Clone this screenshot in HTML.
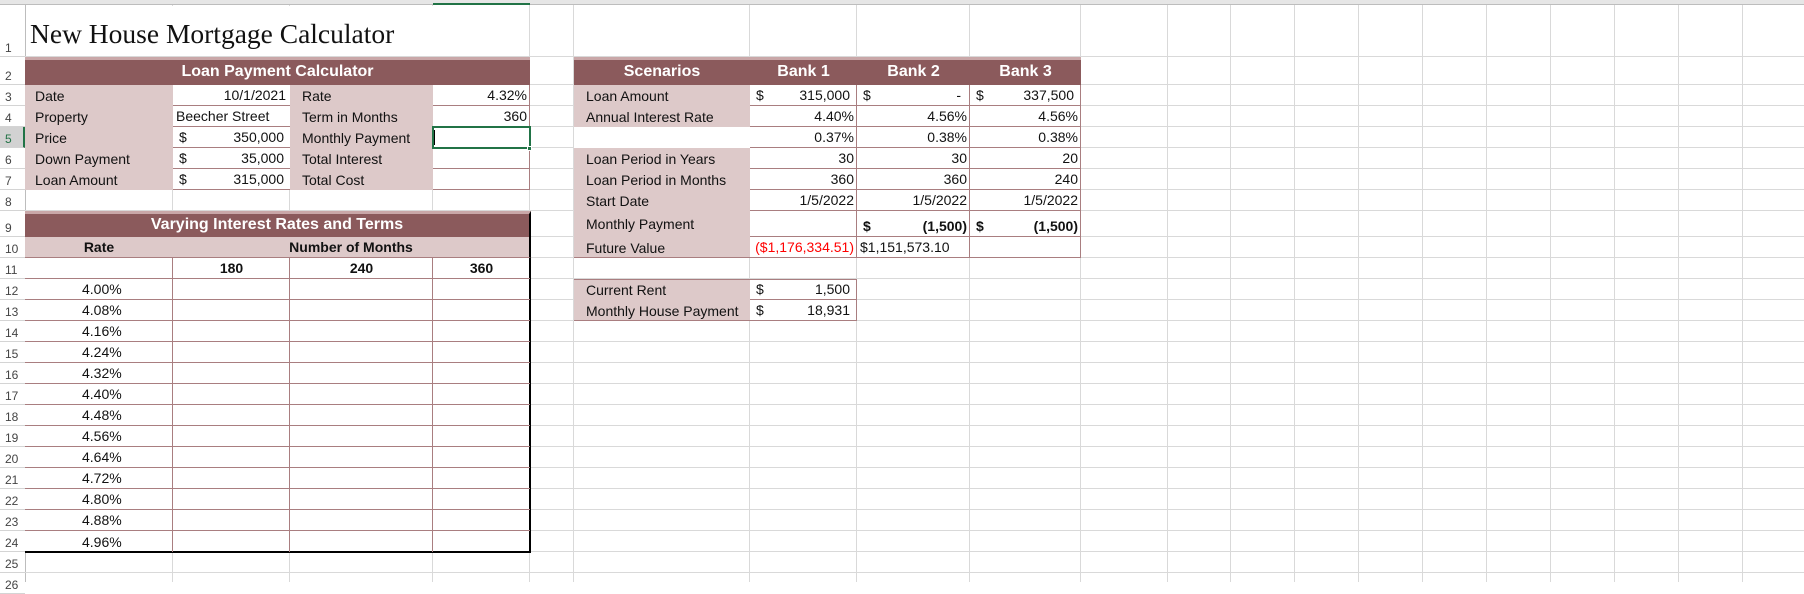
<!DOCTYPE html>
<html><head><meta charset="utf-8"><style>
body{margin:0;width:1804px;height:582px;overflow:hidden;background:#fff;position:relative;font-family:"Liberation Sans",sans-serif}
div{position:absolute;box-sizing:border-box}
.v{top:5px;height:577px;width:1px;background:#d9d9d9}
.h{left:25px;width:1779px;height:1px;background:#d9d9d9}
.rh{left:0;width:25px;font-size:12px;color:#444;padding-left:5px;display:flex;align-items:flex-end;padding-bottom:1px;border-bottom:1px solid #d4d4d4}
.t{font-size:14px;color:#111;white-space:nowrap;display:flex;align-items:flex-end;padding:0 4px 2px 4px;height:21px;line-height:16px}
.r{justify-content:flex-end}
.ce{justify-content:center}
.b{font-weight:bold}
.lt{background:#ddc9c9}
.dk{background:#8b5a5c;color:#fff;font-weight:bold;font-size:16px;justify-content:center;display:flex;align-items:center;border-top:3px solid #c9a7a8}
.w{background:#fff}
.pb{border-bottom:1px solid #a97e80}
.pr{border-right:1px solid #a97e80}
.d{position:absolute;left:6px;bottom:2px}
</style></head><body>
<div style="left:0;top:0;width:1804px;height:5px;background:#e6e6e6;border-bottom:1px solid #bdbdbd"></div>
<div style="left:433px;top:3px;width:97px;height:2px;background:#217346"></div>
<div class="v" style="left:25px;background:#bdbdbd"></div>
<div class="v" style="left:172px"></div><div class="v" style="left:289px"></div><div class="v" style="left:432px"></div><div class="v" style="left:529px"></div><div class="v" style="left:573px"></div><div class="v" style="left:749px"></div><div class="v" style="left:856px"></div><div class="v" style="left:969px"></div><div class="v" style="left:1080px"></div><div class="v" style="left:1167px"></div><div class="v" style="left:1230px"></div><div class="v" style="left:1294px"></div><div class="v" style="left:1358px"></div><div class="v" style="left:1422px"></div><div class="v" style="left:1486px"></div><div class="v" style="left:1550px"></div><div class="v" style="left:1614px"></div><div class="v" style="left:1678px"></div><div class="v" style="left:1742px"></div>
<div class="h" style="top:56px"></div><div class="h" style="top:84px"></div><div class="h" style="top:105px"></div><div class="h" style="top:126px"></div><div class="h" style="top:147px"></div><div class="h" style="top:168px"></div><div class="h" style="top:189px"></div><div class="h" style="top:210px"></div><div class="h" style="top:236px"></div><div class="h" style="top:257px"></div><div class="h" style="top:278px"></div><div class="h" style="top:299px"></div><div class="h" style="top:320px"></div><div class="h" style="top:341px"></div><div class="h" style="top:362px"></div><div class="h" style="top:383px"></div><div class="h" style="top:404px"></div><div class="h" style="top:425px"></div><div class="h" style="top:446px"></div><div class="h" style="top:467px"></div><div class="h" style="top:488px"></div><div class="h" style="top:509px"></div><div class="h" style="top:530px"></div><div class="h" style="top:551px"></div><div class="h" style="top:572px"></div>
<div class="rh" style="top:5px;height:52px">1</div>
<div class="rh" style="top:57px;height:28px">2</div>
<div class="rh" style="top:85px;height:21px">3</div>
<div class="rh" style="top:106px;height:21px">4</div>
<div class="rh" style="top:127px;height:21px;background:#d2d2d2;color:#217346;border-right:2px solid #217346">5</div>
<div class="rh" style="top:148px;height:21px">6</div>
<div class="rh" style="top:169px;height:21px">7</div>
<div class="rh" style="top:190px;height:21px">8</div>
<div class="rh" style="top:211px;height:26px">9</div>
<div class="rh" style="top:237px;height:21px">10</div>
<div class="rh" style="top:258px;height:21px">11</div>
<div class="rh" style="top:279px;height:21px">12</div>
<div class="rh" style="top:300px;height:21px">13</div>
<div class="rh" style="top:321px;height:21px">14</div>
<div class="rh" style="top:342px;height:21px">15</div>
<div class="rh" style="top:363px;height:21px">16</div>
<div class="rh" style="top:384px;height:21px">17</div>
<div class="rh" style="top:405px;height:21px">18</div>
<div class="rh" style="top:426px;height:21px">19</div>
<div class="rh" style="top:447px;height:21px">20</div>
<div class="rh" style="top:468px;height:21px">21</div>
<div class="rh" style="top:489px;height:21px">22</div>
<div class="rh" style="top:510px;height:21px">23</div>
<div class="rh" style="top:531px;height:21px">24</div>
<div class="rh" style="top:552px;height:21px">25</div>
<div class="rh" style="top:573px;height:21px">26</div>
<div style="left:26px;top:6px;width:503px;height:50px;background:#fff"></div>
<div style="left:30px;top:18px;font-family:'Liberation Serif',serif;font-size:27.5px;color:#111;white-space:nowrap">New House Mortgage Calculator</div>
<div class="dk t" style="left:25px;top:57px;width:505px;height:28px">Loan Payment Calculator</div>
<div class="lt" style="left:25px;top:85px;width:148px;height:105px"></div>
<div class="lt" style="left:290px;top:85px;width:143px;height:105px"></div>
<div class="t lt" style="left:25px;top:85px;width:148px;padding-left:10px">Date</div>
<div class="t lt" style="left:25px;top:106px;width:148px;padding-left:10px">Property</div>
<div class="t lt" style="left:25px;top:127px;width:148px;padding-left:10px">Price</div>
<div class="t lt" style="left:25px;top:148px;width:148px;padding-left:10px">Down Payment</div>
<div class="t lt" style="left:25px;top:169px;width:148px;padding-left:10px">Loan Amount</div>
<div class="t w r pb" style="left:173px;top:85px;width:117px">10/1/2021</div>
<div class="t w pb" style="left:173px;top:106px;width:117px;padding-left:3px">Beecher Street</div>
<div class="t w r pb" style="left:173px;top:127px;width:117px;padding-right:6px"><span class="d">$</span>350,000</div>
<div class="t w r pb" style="left:173px;top:148px;width:117px;padding-right:6px"><span class="d">$</span>35,000</div>
<div class="t w r pb" style="left:173px;top:169px;width:117px;padding-right:6px"><span class="d">$</span>315,000</div>
<div class="t lt" style="left:290px;top:85px;width:143px;padding-left:12px">Rate</div>
<div class="t lt" style="left:290px;top:106px;width:143px;padding-left:12px">Term in Months</div>
<div class="t lt" style="left:290px;top:127px;width:143px;padding-left:12px">Monthly Payment</div>
<div class="t lt" style="left:290px;top:148px;width:143px;padding-left:12px">Total Interest</div>
<div class="t lt" style="left:290px;top:169px;width:143px;padding-left:12px">Total Cost</div>
<div class="t w r pb pr" style="left:433px;top:85px;width:97px;padding-right:2px">4.32%</div>
<div class="t w r pb pr" style="left:433px;top:106px;width:97px;padding-right:2px">360</div>
<div class="t w pb pr" style="left:433px;top:127px;width:97px"></div>
<div class="t w pb pr" style="left:433px;top:148px;width:97px"></div>
<div class="t w pb pr" style="left:433px;top:169px;width:97px"></div>
<div style="left:432px;top:126px;width:99px;height:23px;border:2px solid #217346"></div>
<div style="left:434px;top:130px;width:1px;height:15px;background:#000"></div>
<div style="left:527px;top:146px;width:5px;height:5px;background:#217346;border:1px solid #fff"></div>
<div class="dk t" style="left:25px;top:211px;width:506px;height:26px;border-right:2px solid #000">Varying Interest Rates and Terms</div>
<div class="t lt b ce pb" style="left:25px;top:237px;width:148px">Rate</div>
<div class="t lt b ce pb" style="left:173px;top:237px;width:358px;border-right:2px solid #000">Number of Months</div>
<div style="left:25px;top:258px;width:506px;height:295px;background:#fff;border-right:2px solid #000;border-bottom:2px solid #000"></div>
<div style="left:172px;top:258px;width:1px;height:294px;background:#a97e80"></div>
<div style="left:289px;top:258px;width:1px;height:294px;background:#a97e80"></div>
<div style="left:432px;top:258px;width:1px;height:294px;background:#a97e80"></div>
<div class="t b ce pb" style="left:173px;top:258px;width:117px;height:21px">180</div>
<div class="t b ce pb" style="left:290px;top:258px;width:143px;height:21px">240</div>
<div class="t b ce pb" style="left:433px;top:258px;width:97px;height:21px">360</div>
<div class="pb" style="left:25px;top:258px;width:148px;height:21px"></div>
<div class="t ce pb" style="left:25px;top:279px;width:505px;justify-content:flex-start;padding-left:57px">4.00%</div>
<div class="t ce pb" style="left:25px;top:300px;width:505px;justify-content:flex-start;padding-left:57px">4.08%</div>
<div class="t ce pb" style="left:25px;top:321px;width:505px;justify-content:flex-start;padding-left:57px">4.16%</div>
<div class="t ce pb" style="left:25px;top:342px;width:505px;justify-content:flex-start;padding-left:57px">4.24%</div>
<div class="t ce pb" style="left:25px;top:363px;width:505px;justify-content:flex-start;padding-left:57px">4.32%</div>
<div class="t ce pb" style="left:25px;top:384px;width:505px;justify-content:flex-start;padding-left:57px">4.40%</div>
<div class="t ce pb" style="left:25px;top:405px;width:505px;justify-content:flex-start;padding-left:57px">4.48%</div>
<div class="t ce pb" style="left:25px;top:426px;width:505px;justify-content:flex-start;padding-left:57px">4.56%</div>
<div class="t ce pb" style="left:25px;top:447px;width:505px;justify-content:flex-start;padding-left:57px">4.64%</div>
<div class="t ce pb" style="left:25px;top:468px;width:505px;justify-content:flex-start;padding-left:57px">4.72%</div>
<div class="t ce pb" style="left:25px;top:489px;width:505px;justify-content:flex-start;padding-left:57px">4.80%</div>
<div class="t ce pb" style="left:25px;top:510px;width:505px;justify-content:flex-start;padding-left:57px">4.88%</div>
<div class="t ce" style="left:25px;top:531px;width:505px;justify-content:flex-start;padding-left:57px">4.96%</div>
<div class="dk" style="left:574px;top:57px;width:507px;height:28px"></div>
<div class="t dk" style="left:574px;top:57px;width:176px;height:28px">Scenarios</div>
<div class="t dk" style="left:750px;top:57px;width:107px;height:28px">Bank 1</div>
<div class="t dk" style="left:857px;top:57px;width:113px;height:28px">Bank 2</div>
<div class="t dk" style="left:970px;top:57px;width:111px;height:28px">Bank 3</div>
<div class="lt pb" style="left:574px;top:85px;width:176px;height:173px"></div>
<div class="w" style="left:574px;top:127px;width:176px;height:21px"></div>
<div class="t" style="left:574px;top:85px;padding-left:12px">Loan Amount</div>
<div class="t" style="left:574px;top:106px;padding-left:12px">Annual Interest Rate</div>
<div class="t" style="left:574px;top:148px;padding-left:12px">Loan Period in Years</div>
<div class="t" style="left:574px;top:169px;padding-left:12px">Loan Period in Months</div>
<div class="t" style="left:574px;top:190px;padding-left:12px">Start Date</div>
<div class="t" style="left:574px;top:213px;padding-left:12px">Monthly Payment</div>
<div class="t" style="left:574px;top:237px;padding-left:12px">Future Value</div>
<div class="t w r pb pr" style="left:750px;top:85px;width:107px;padding-right:6px"><span class="d">$</span>315,000</div>
<div class="t w r pb pr" style="left:857px;top:85px;width:113px;padding-right:8px"><span class="d">$</span>-</div>
<div class="t w r pb pr" style="left:970px;top:85px;width:111px;padding-right:6px"><span class="d">$</span>337,500</div>
<div class="t w r pb pr" style="left:750px;top:106px;width:107px;padding-right:2px">4.40%</div>
<div class="t w r pb pr" style="left:857px;top:106px;width:113px;padding-right:2px">4.56%</div>
<div class="t w r pb pr" style="left:970px;top:106px;width:111px;padding-right:2px">4.56%</div>
<div class="t w r pb pr" style="left:750px;top:127px;width:107px;padding-right:2px">0.37%</div>
<div class="t w r pb pr" style="left:857px;top:127px;width:113px;padding-right:2px">0.38%</div>
<div class="t w r pb pr" style="left:970px;top:127px;width:111px;padding-right:2px">0.38%</div>
<div class="t w r pb pr" style="left:750px;top:148px;width:107px;padding-right:2px">30</div>
<div class="t w r pb pr" style="left:857px;top:148px;width:113px;padding-right:2px">30</div>
<div class="t w r pb pr" style="left:970px;top:148px;width:111px;padding-right:2px">20</div>
<div class="t w r pb pr" style="left:750px;top:169px;width:107px;padding-right:2px">360</div>
<div class="t w r pb pr" style="left:857px;top:169px;width:113px;padding-right:2px">360</div>
<div class="t w r pb pr" style="left:970px;top:169px;width:111px;padding-right:2px">240</div>
<div class="t w r pb pr" style="left:750px;top:190px;width:107px;padding-right:2px">1/5/2022</div>
<div class="t w r pb pr" style="left:857px;top:190px;width:113px;padding-right:2px">1/5/2022</div>
<div class="t w r pb pr" style="left:970px;top:190px;width:111px;padding-right:2px">1/5/2022</div>
<div class="t w r pb pr" style="left:750px;top:211px;width:107px;height:26px"></div>
<div class="t w r pb pr b" style="left:857px;top:211px;width:113px;height:26px;padding-right:2px"><span class="d">$</span>(1,500)</div>
<div class="t w r pb pr b" style="left:970px;top:211px;width:111px;height:26px;padding-right:2px"><span class="d">$</span>(1,500)</div>
<div class="t w r pb pr" style="left:750px;top:237px;width:107px;padding-right:2px;color:#f00">($1,176,334.51)</div>
<div class="t w pb pr" style="left:857px;top:237px;width:113px;padding-left:3px">$1,151,573.10</div>
<div class="t w pb pr" style="left:970px;top:237px;width:111px"></div>
<div class="lt pb" style="left:574px;top:279px;width:176px;height:42px;border-top:1px solid #a97e80"></div>
<div class="t" style="left:574px;top:279px;padding-left:12px">Current Rent</div>
<div class="t" style="left:574px;top:300px;padding-left:12px">Monthly House Payment</div>
<div class="t w r pb pr" style="left:750px;top:279px;width:107px;padding-right:6px;border-top:1px solid #a97e80"><span class="d">$</span>1,500</div>
<div class="t w r pb pr" style="left:750px;top:300px;width:107px;padding-right:6px"><span class="d">$</span>18,931</div>
</body></html>
